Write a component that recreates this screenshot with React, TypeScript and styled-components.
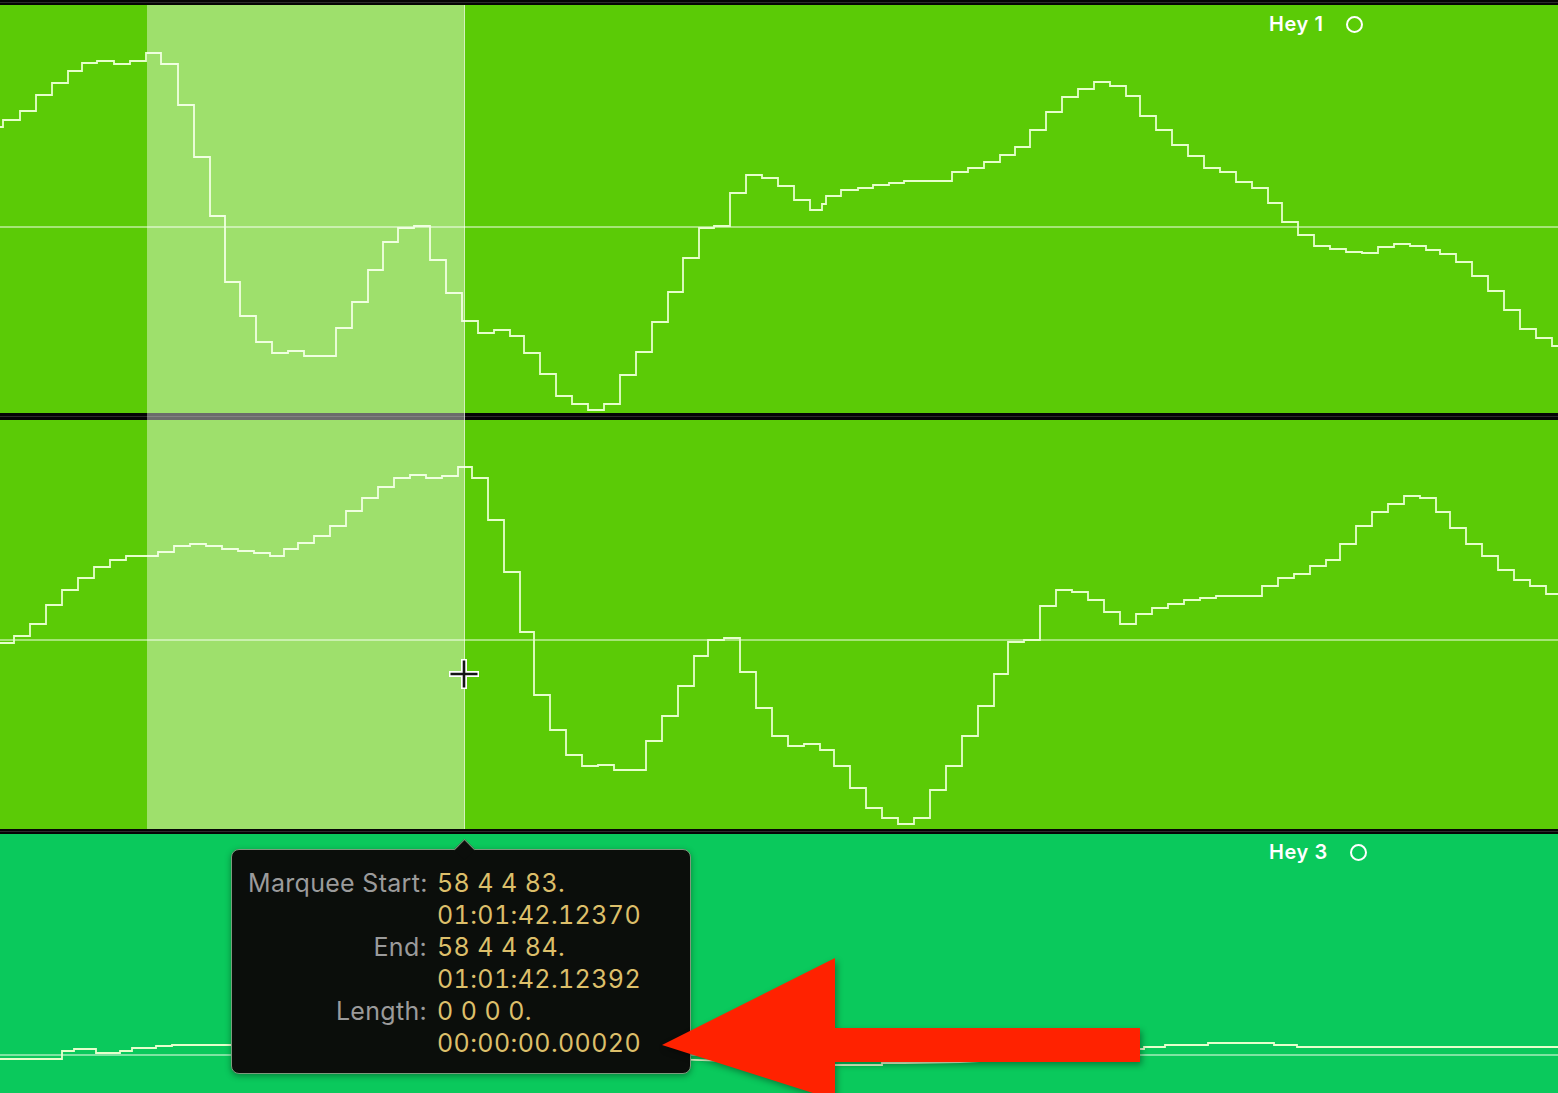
import { Fragment } from "react";
import styled, { createGlobalStyle } from "styled-components";

const GlobalStyle = createGlobalStyle`
  html, body {
    margin: 0;
    padding: 0;
    background: #000;
    overflow: hidden;
  }
`;

type Pt = [number, number];

// step points for each region, in arrange-window coordinates
const heyOne: Pt[] = [
  [0, 127], [3, 127], [3, 120], [20, 120], [20, 111], [36, 111], [36, 95], [52, 95],
  [52, 83], [68, 83], [68, 71], [82, 71], [82, 63], [97, 63], [97, 61], [114, 61],
  [114, 64], [130, 64], [130, 61], [146, 61], [146, 53], [161, 53], [161, 64], [178, 64],
  [178, 105], [194, 105], [194, 157], [210, 157], [210, 216], [225, 216], [225, 282],
  [240, 282], [240, 316], [256, 316], [256, 342], [272, 342], [272, 353], [288, 353],
  [288, 351], [304, 351], [304, 356], [336, 356], [336, 328], [352, 328], [352, 302],
  [368, 302], [368, 270], [383, 270], [383, 242], [398, 242], [398, 228], [414, 228],
  [414, 226], [430, 226], [430, 260], [446, 260], [446, 293], [462, 293], [462, 321],
  [478, 321], [478, 333], [494, 333], [494, 330], [510, 330], [510, 336], [524, 336],
  [524, 353], [540, 353], [540, 374], [556, 374], [556, 396], [572, 396], [572, 404],
  [588, 404], [588, 410], [604, 410], [604, 404], [620, 404], [620, 375], [636, 375],
  [636, 352], [652, 352], [652, 322], [668, 322], [668, 292], [683, 292], [683, 258],
  [699, 258], [699, 228], [714, 228], [714, 226], [730, 226], [730, 193], [746, 193],
  [746, 175], [762, 175], [762, 178], [778, 178], [778, 186], [794, 186], [794, 200],
  [810, 200], [810, 210], [822, 210], [822, 204], [826, 204], [826, 196], [841, 196],
  [841, 190], [858, 190], [858, 188], [873, 188], [873, 185], [889, 185], [889, 183],
  [904, 183], [904, 181], [952, 181], [952, 172], [968, 172], [968, 168], [984, 168],
  [984, 162], [1000, 162], [1000, 155], [1015, 155], [1015, 147], [1030, 147], [1030, 130],
  [1046, 130], [1046, 112], [1062, 112], [1062, 97], [1078, 97], [1078, 89], [1094, 89],
  [1094, 82], [1110, 82], [1110, 86], [1126, 86], [1126, 96], [1140, 96], [1140, 116],
  [1156, 116], [1156, 130], [1172, 130], [1172, 145], [1188, 145], [1188, 156], [1204, 156],
  [1204, 168], [1220, 168], [1220, 172], [1236, 172], [1236, 182], [1252, 182], [1252, 188],
  [1268, 188], [1268, 203], [1282, 203], [1282, 222], [1298, 222], [1298, 235], [1314, 235],
  [1314, 246], [1330, 246], [1330, 249], [1346, 249], [1346, 252], [1362, 252], [1362, 253],
  [1378, 253], [1378, 247], [1394, 247], [1394, 244], [1410, 244], [1410, 246], [1426, 246],
  [1426, 250], [1440, 250], [1440, 254], [1456, 254], [1456, 262], [1472, 262], [1472, 276],
  [1488, 276], [1488, 291], [1504, 291], [1504, 310], [1520, 310], [1520, 329], [1536, 329],
  [1536, 338], [1552, 338], [1552, 346], [1558, 346],
];

const heyTwo: Pt[] = [
  [0, 643], [14, 643], [14, 636], [30, 636], [30, 624], [46, 624], [46, 605], [62, 605],
  [62, 590], [78, 590], [78, 578], [94, 578], [94, 567], [110, 567], [110, 560], [126, 560],
  [126, 556], [158, 556], [158, 552], [174, 552], [174, 546], [190, 546], [190, 544],
  [206, 544], [206, 546], [222, 546], [222, 549], [238, 549], [238, 551], [254, 551],
  [254, 553], [270, 553], [270, 556], [284, 556], [284, 549], [298, 549], [298, 543],
  [314, 543], [314, 536], [330, 536], [330, 526], [346, 526], [346, 511], [362, 511],
  [362, 498], [378, 498], [378, 487], [394, 487], [394, 478], [410, 478], [410, 475],
  [426, 475], [426, 478], [442, 478], [442, 476], [458, 476], [458, 467], [472, 467],
  [472, 478], [488, 478], [488, 520], [504, 520], [504, 572], [520, 572], [520, 632],
  [534, 632], [534, 695], [550, 695], [550, 730], [566, 730], [566, 755], [582, 755],
  [582, 766], [598, 766], [598, 765], [614, 765], [614, 770], [646, 770], [646, 741],
  [662, 741], [662, 716], [678, 716], [678, 686], [694, 686], [694, 656], [708, 656],
  [708, 640], [724, 640], [724, 638], [740, 638], [740, 645], [740, 672], [756, 672],
  [756, 708], [772, 708], [772, 736], [788, 736], [788, 746], [804, 746], [804, 744],
  [820, 744], [820, 750], [834, 750], [834, 766], [850, 766], [850, 788], [866, 788],
  [866, 808], [882, 808], [882, 818], [898, 818], [898, 824], [914, 824], [914, 818],
  [930, 818], [930, 790], [946, 790], [946, 766], [962, 766], [962, 736], [978, 736],
  [978, 706], [994, 706], [994, 674], [1008, 674], [1008, 642], [1024, 642], [1024, 640],
  [1040, 640], [1040, 606], [1056, 606], [1056, 590], [1072, 590], [1072, 592], [1088, 592],
  [1088, 600], [1104, 600], [1104, 612], [1120, 612], [1120, 624], [1136, 624], [1136, 614],
  [1152, 614], [1152, 608], [1168, 608], [1168, 604], [1184, 604], [1184, 600], [1200, 600],
  [1200, 598], [1216, 598], [1216, 596], [1262, 596], [1262, 586], [1278, 586], [1278, 578],
  [1294, 578], [1294, 574], [1310, 574], [1310, 566], [1326, 566], [1326, 560], [1340, 560],
  [1340, 544], [1356, 544], [1356, 526], [1372, 526], [1372, 512], [1388, 512], [1388, 504],
  [1404, 504], [1404, 496], [1420, 496], [1420, 498], [1436, 498], [1436, 512], [1450, 512],
  [1450, 528], [1466, 528], [1466, 544], [1482, 544], [1482, 556], [1498, 556], [1498, 570],
  [1514, 570], [1514, 580], [1530, 580], [1530, 586], [1546, 586], [1546, 594], [1558, 594],
];

const heyThree: Pt[] = [
  [0, 1059], [62, 1059], [62, 1051], [74, 1051], [74, 1049], [96, 1049], [96, 1053],
  [120, 1053], [120, 1051], [132, 1051], [132, 1048], [156, 1048], [156, 1046], [172, 1046],
  [172, 1045], [232, 1045], [824, 1064], [828, 1064], [828, 1065], [882, 1065], [882, 1063],
  [904, 1063], [960, 1062], [1040, 1058], [1078, 1058], [1078, 1053], [1100, 1053],
  [1100, 1051], [1133, 1051], [1133, 1049], [1144, 1049], [1144, 1047], [1165, 1047],
  [1165, 1045], [1208, 1045], [1208, 1043], [1274, 1043], [1274, 1045], [1297, 1045],
  [1297, 1047], [1558, 1047],
];

const toPoints = (pts: Pt[]) => pts.map(([x, y]) => `${x},${y}`).join(" ");

const Arrange = styled.div`
  position: relative;
  width: 1558px;
  height: 1093px;
  overflow: hidden;
  display: flex;
  flex-direction: column;
  font-family: Inter, "Liberation Sans", Arial, sans-serif;
`;

const Rule = styled.div<{ $h: number }>`
  flex: none;
  height: ${(p) => p.$h}px;
  background-image: linear-gradient(
    to bottom,
    #050505 0,
    #050505 40%,
    #2c2c2c 40%,
    #2c2c2c 60%,
    #050505 60%
  );
`;

const Track = styled.div<{ $h?: number; $color: string }>`
  position: relative;
  flex: ${(p) => (p.$h ? "none" : "1")};
  height: ${(p) => (p.$h ? `${p.$h}px` : "auto")};
  background: ${(p) => p.$color};
`;

const Wave = styled.svg`
  display: block;
  width: 100%;
  height: 100%;
`;

const RegionName = styled.div<{ $top: number }>`
  position: absolute;
  top: ${(p) => p.$top}px;
  left: 1269px;
  display: flex;
  align-items: center;
  gap: 22px;
  color: #fff;
  font-size: 20px;
  font-weight: 600;
  letter-spacing: 0.6px;
`;

const LoopDot = styled.span`
  width: 13px;
  height: 13px;
  border: 2px solid #fff;
  border-radius: 50%;
`;

const Marquee = styled.div`
  position: absolute;
  left: 147px;
  top: 5px;
  width: 318px;
  height: 824px;
  background: rgba(255, 255, 255, 0.41);
  border-right: 1px solid rgba(255, 255, 255, 0.55);
  box-sizing: border-box;
  pointer-events: none;
`;

const Crosshair = styled.svg`
  position: absolute;
  left: 448px;
  top: 658px;
`;

const HelpTag = styled.div`
  position: absolute;
  left: 231px;
  top: 849px;
  width: 460px;
  box-sizing: border-box;
  padding: 17px 16px 14px 16px;
  background: #0b0e0b;
  border: 1px solid #7d9a7d;
  border-radius: 8px;
  box-shadow: 0 2px 6px rgba(0, 0, 0, 0.35);

  &::before {
    content: "";
    position: absolute;
    left: 225px;
    top: -8px;
    width: 14px;
    height: 14px;
    background: #0b0e0b;
    border-left: 1px solid #7d9a7d;
    border-top: 1px solid #7d9a7d;
    transform: rotate(45deg);
  }
`;

const TagGrid = styled.div`
  display: grid;
  grid-template-columns: 179px auto;
  column-gap: 10px;
  font-size: 25px;
  line-height: 32px;
`;

const TagLabel = styled.div`
  color: #9b9b9b;
  text-align: right;
  white-space: nowrap;
  letter-spacing: 0.3px;
`;

const TagValue = styled.div`
  color: #dcbf6a;
  white-space: nowrap;
  letter-spacing: 0.4px;
  font-variant-numeric: tabular-nums;
`;

const Pointer = styled.svg`
  position: absolute;
  left: 655px;
  top: 955px;
  filter: drop-shadow(2px 3px 3px rgba(0, 0, 0, 0.35));
`;

function Region({
  pts,
  top,
  height,
  zero,
}: {
  pts: Pt[];
  top: number;
  height: number;
  zero: number;
}) {
  return (
    <Wave viewBox={`0 ${top} 1558 ${height}`} preserveAspectRatio="none">
      <line x1="0" x2="1558" y1={zero} y2={zero} stroke="#f2ffe8" strokeWidth="1.2" />
      <polyline
        points={toPoints(pts)}
        fill="none"
        stroke="#e6ffcc"
        strokeWidth="1.8"
        strokeLinejoin="miter"
      />
    </Wave>
  );
}

const rows = [
  { label: "Marquee Start:", bars: "58 4 4 83.", time: "01:01:42.12370" },
  { label: "End:", bars: "58 4 4 84.", time: "01:01:42.12392" },
  { label: "Length:", bars: "0 0 0 0.", time: "00:00:00.00020" },
];

export default function App() {
  return (
    <>
      <GlobalStyle />
      <Arrange>
        <Rule $h={5} />
        <Track $h={408} $color="#5bcb06">
          <Region pts={heyOne} top={5} height={408} zero={227} />
          <RegionName $top={7}>
            Hey 1
            <LoopDot />
          </RegionName>
        </Track>
        <Rule $h={7} />
        <Track $h={409} $color="#5bcb06">
          <Region pts={heyTwo} top={420} height={409} zero={640} />
        </Track>
        <Rule $h={5} />
        <Track $color="#0ac95c">
          <Region pts={heyThree} top={834} height={259} zero={1055} />
          <RegionName $top={6}>
            Hey 3
            <LoopDot />
          </RegionName>
        </Track>

        <Marquee />

        <Crosshair width="32" height="32" viewBox="0 0 32 32">
          <path d="M16 1v30M1 16h30" stroke="#fff" strokeWidth="6" />
          <path d="M16 2.5v27M2.5 16h27" stroke="#151515" strokeWidth="2.6" />
        </Crosshair>

        <HelpTag>
          <TagGrid>
            {rows.map((r) => (
              <Fragment key={r.label}>
                <TagLabel>{r.label}</TagLabel>
                <TagValue>
                  {r.bars}
                  <br />
                  {r.time}
                </TagValue>
              </Fragment>
            ))}
          </TagGrid>
        </HelpTag>

        <Pointer width="500" height="140" viewBox="655 955 500 140">
          <polygon
            points="662,1045 835,958 835,1028 1140,1028 1140,1062 835,1062 835,1100"
            fill="#ff2200"
          />
        </Pointer>
      </Arrange>
    </>
  );
}
